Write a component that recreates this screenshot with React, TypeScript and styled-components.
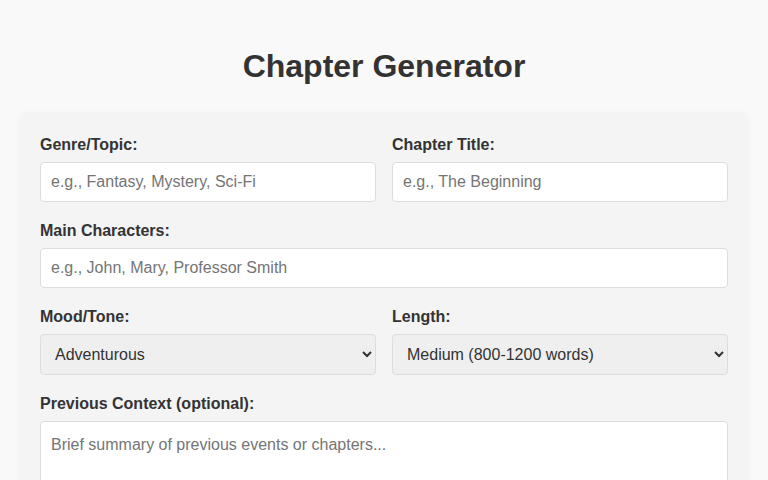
import React from "react";
import styled, { createGlobalStyle } from "styled-components";

const GlobalStyle = createGlobalStyle`
  body {
    margin: 0;
    padding: 20px;
    background: #f9f9f9;
    font-family: "Liberation Sans", Arial, sans-serif;
    color: #333;
  }
`;

const Container = styled.div`
  max-width: 800px;
  margin: 0 auto;
`;

const Title = styled.h1`
  text-align: center;
  font-size: 32px;
  color: #333;
  margin: 28px 0 27px;
`;

const Card = styled.div`
  background: #f4f4f4;
  border-radius: 8px;
  padding: 24px 20px 20px;
  box-shadow: 0 2px 6px rgba(0, 0, 0, 0.05);
`;

const Row = styled.div`
  display: grid;
  grid-template-columns: 1fr 1fr;
  gap: 16px;
`;

const Group = styled.div`
  margin-bottom: 20px;
`;

const Label = styled.label`
  display: block;
  font-weight: bold;
  font-size: 16px;
  margin-bottom: 8px;
  color: #333;
`;

const fieldBase = `
  width: 100%;
  box-sizing: border-box;
  padding: 10px;
  border: 1px solid #ddd;
  border-radius: 4px;
  font-size: 16px;
  font-family: "Liberation Sans", Arial, sans-serif;
  color: #333;
  &::placeholder {
    color: #757575;
  }
`;

const Input = styled.input`
  ${fieldBase}
  background: #fff;
`;

const Select = styled.select`
  ${fieldBase}
`;

const TextArea = styled.textarea`
  ${fieldBase}
  background: #fff;
  line-height: 1.6;
  min-height: 100px;
  resize: vertical;
`;

export default function App() {
  return (
    <>
      <GlobalStyle />
      <Container>
        <Title>Chapter Generator</Title>
        <Card>
          <Row>
            <Group>
              <Label>Genre/Topic:</Label>
              <Input placeholder="e.g., Fantasy, Mystery, Sci-Fi" />
            </Group>
            <Group>
              <Label>Chapter Title:</Label>
              <Input placeholder="e.g., The Beginning" />
            </Group>
          </Row>
          <Group>
            <Label>Main Characters:</Label>
            <Input placeholder="e.g., John, Mary, Professor Smith" />
          </Group>
          <Row>
            <Group>
              <Label>Mood/Tone:</Label>
              <Select defaultValue="adventurous">
                <option value="adventurous">Adventurous</option>
                <option value="mysterious">Mysterious</option>
                <option value="romantic">Romantic</option>
                <option value="dark">Dark</option>
                <option value="humorous">Humorous</option>
              </Select>
            </Group>
            <Group>
              <Label>Length:</Label>
              <Select defaultValue="medium">
                <option value="short">Short (400-800 words)</option>
                <option value="medium">Medium (800-1200 words)</option>
                <option value="long">Long (1200-2000 words)</option>
              </Select>
            </Group>
          </Row>
          <Group>
            <Label>Previous Context (optional):</Label>
            <TextArea placeholder="Brief summary of previous events or chapters..." />
          </Group>
        </Card>
      </Container>
    </>
  );
}
